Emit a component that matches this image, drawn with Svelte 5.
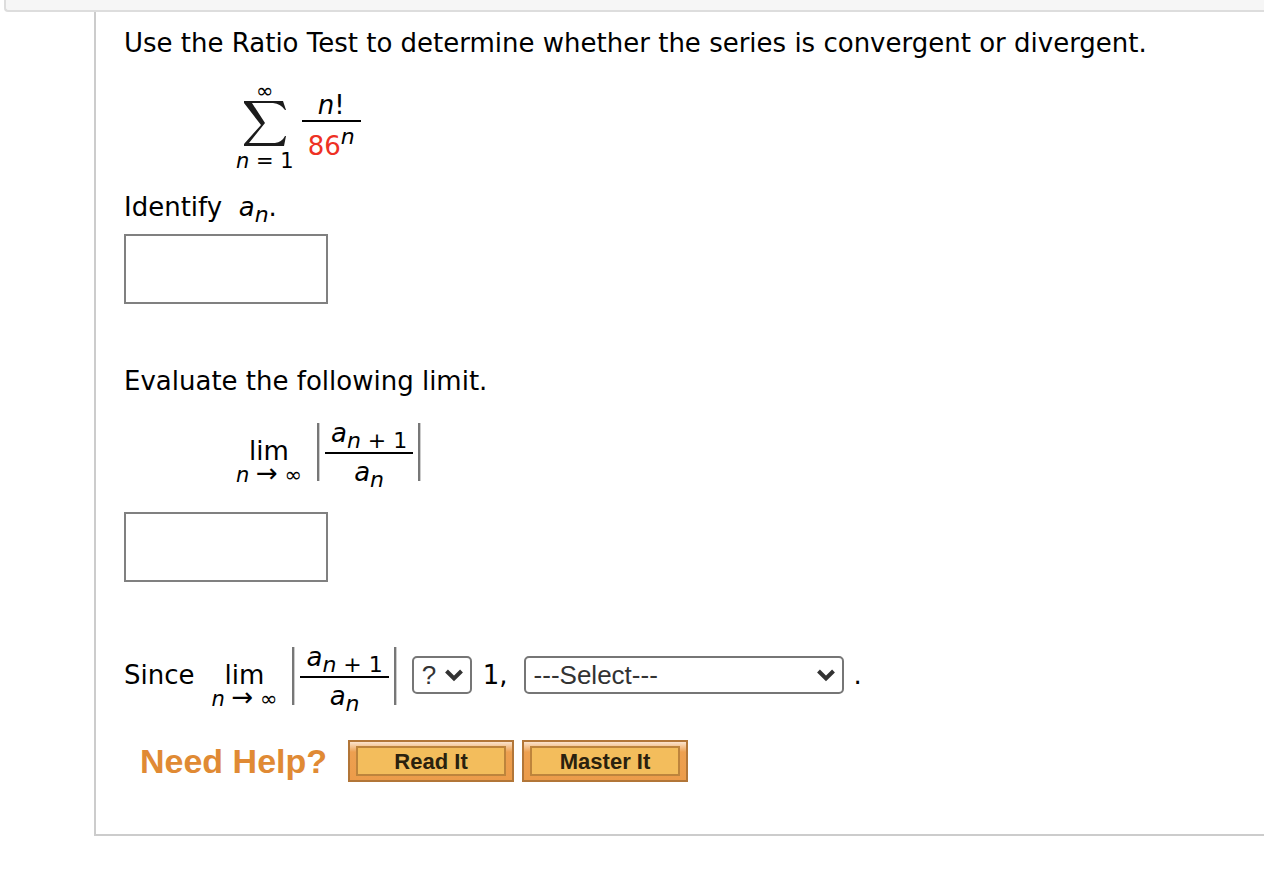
<script lang="ts">
  let term = $state('');
  let limit = $state('');
  let relation = $state('?');
  let conclusion = $state('');
</script>

{#snippet chevron()}
  <svg class="chevron" viewBox="0 0 18 13" aria-hidden="true">
    <path d="M1.5 2 L9 9.5 L16.5 2" fill="none" stroke="#333" stroke-width="4" />
  </svg>
{/snippet}

{#snippet ratioLimit()}
  <div class="limit">
    <div class="lim">
      <span>lim</span>
      <span class="under"><i>n</i> <span class="arrow">→</span> ∞</span>
    </div>
    <div class="abs">
      <div class="fraction">
        <div class="num"><i>a</i><sub><i>n</i> + 1</sub></div>
        <div class="den"><i>a</i><sub><i>n</i></sub></div>
      </div>
    </div>
  </div>
{/snippet}

<div class="part-header"></div>
<main class="question">
  <p>Use the Ratio Test to determine whether the series is convergent or divergent.</p>

  <div class="series">
    <div class="sum">
      <span class="upper">∞</span>
      <svg class="sigma" viewBox="0 0 42 46" aria-hidden="true">
        <path
          d="M0 0 H39 L42 9 H41 Q37 3 29 2 H8 L21 22 L5 42 H31 Q38 41 41 35 H42 L40 45 H0 V43 L17 24 L0 2 Z"
          fill="#1c1c1c"
        />
      </svg>
      <span class="lower"><i>n</i> = 1</span>
    </div>
    <div class="fraction">
      <div class="num plain"><i>n</i>!</div>
      <div class="den power"><span class="random">86</span><sup><i>n</i></sup></div>
    </div>
  </div>

  <label class="identify" for="term">Identify&nbsp; <i>a</i><sub><i>n</i></sub>.</label>
  <input id="term" class="answer" type="text" bind:value={term} />

  <label class="evaluate" for="limit">Evaluate the following limit.</label>
  <div class="display">{@render ratioLimit()}</div>
  <input id="limit" class="answer" type="text" bind:value={limit} />

  <div class="since">
    <span class="word">Since</span>
    {@render ratioLimit()}
    <span class="select small">
      <select aria-label="Comparison" bind:value={relation}>
        <option value="?">?</option>
        <option value="<">&lt;</option>
        <option value="=">=</option>
        <option value=">">&gt;</option>
      </select>
      {@render chevron()}
    </span>
    <span>1,</span>
    <span class="select wide">
      <select aria-label="Conclusion" bind:value={conclusion}>
        <option value="">---Select---</option>
        <option value="c">the series is convergent</option>
        <option value="d">the series is divergent</option>
        <option value="i">the test is inconclusive</option>
      </select>
      {@render chevron()}
    </span>
    <span>.</span>
  </div>

  <div class="help">
    <strong>Need Help?</strong>
    <button type="button"><span>Read It</span></button>
    <button type="button"><span>Master It</span></button>
  </div>
</main>

<style>
  :global(body) {
    background: #fff;
    overflow-x: hidden;
  }

  .part-header {
    box-sizing: border-box;
    height: 12px;
    margin-left: 4px;
    background: #f6f6f6;
    border: 2px solid #ddd;
    border-width: 0 0 2px 2px;
    border-bottom-left-radius: 4px;
  }

  .question {
    margin-left: 94px;
    padding: 15px 0 52px 28px;
    border-left: 2px solid #ccc;
    border-bottom: 2px solid #ccc;
    font-family: Verdana, "DejaVu Sans", sans-serif;
    font-size: 26px;
    line-height: 32px;
    color: #000;
  }

  p {
    margin: 0;
  }

  sub,
  sup {
    font-size: 22px;
    line-height: 0;
    vertical-align: baseline;
    position: relative;
  }

  sub {
    top: 6px;
  }

  sup {
    top: -11px;
  }

  .series {
    display: flex;
    gap: 8px;
    margin: 22px 0 0 112px;
  }

  .sum {
    display: flex;
    flex-direction: column;
    align-items: center;
  }

  .upper {
    font-size: 21px;
    line-height: 20px;
  }

  .sigma {
    width: 42px;
    height: 46px;
  }

  .lower {
    font-size: 21px;
    line-height: 28px;
  }

  .fraction {
    text-align: center;
    white-space: nowrap;
  }

  .num {
    border-bottom: 2px solid #000;
    padding: 0 6px;
    line-height: 34px;
    height: 36px;
  }

  .den {
    line-height: 36px;
  }

  .plain {
    height: 37px;
    padding-top: 2px;
    line-height: 44px;
  }

  .power {
    padding: 0 6px;
    line-height: 48px;
  }

  .random {
    color: #ee3124;
  }

  label {
    display: block;
  }

  .identify {
    margin-top: 16px;
  }

  .evaluate {
    margin-top: 61px;
  }

  .answer {
    display: block;
    box-sizing: border-box;
    width: 204px;
    height: 70px;
    margin: 0;
    padding: 4px 8px;
    border: 2px solid #808080;
    border-radius: 0;
    background: #fff;
    font: inherit;
  }

  .identify + .answer {
    margin-top: 11px;
  }

  .display {
    margin: 19px 0 22px 112px;
  }

  .limit {
    display: flex;
    align-items: center;
    gap: 15px;
  }

  .lim {
    display: flex;
    flex-direction: column;
    align-items: center;
    padding-top: 20px;
    line-height: 24px;
  }

  .under {
    font-size: 21px;
    white-space: nowrap;
  }

  .arrow {
    font-size: 26px;
    line-height: 0;
  }

  .abs {
    display: flex;
    padding: 0 8px;
    background:
      linear-gradient(to right, #777 2px, #ccc 2px) left 7px / 3px 58px no-repeat,
      linear-gradient(to right, #777 2px, #ccc 2px) right 7px / 3px 58px no-repeat;
  }

  .since {
    display: flex;
    align-items: center;
    margin-top: 54px;
  }

  .since .limit {
    margin-top: 4px;
  }

  .word {
    margin-right: 17px;
  }

  .select {
    position: relative;
    display: inline-block;
  }

  .small {
    width: 60px;
    margin: 0 11px 0 15px;
  }

  .wide {
    width: 320px;
    margin: 0 10px 0 16px;
  }

  select {
    display: block;
    appearance: none;
    box-sizing: border-box;
    width: 100%;
    height: 38px;
    margin: 0;
    padding: 0 8px;
    border: 2px solid #767676;
    border-radius: 5px;
    background: #fff;
    color: #333;
    font-family: Arial, "Liberation Sans", sans-serif;
    font-size: 26px;
  }

  .chevron {
    position: absolute;
    top: 13px;
    right: 9px;
    width: 18px;
    height: 13px;
    pointer-events: none;
  }

  .help {
    display: flex;
    align-items: center;
    gap: 8px;
    margin: 26px 0 0 16px;
    font-family: Arial, "Liberation Sans", sans-serif;
  }

  strong {
    margin-right: 13px;
    font-size: 34px;
    color: #e08a34;
  }

  button {
    box-sizing: border-box;
    width: 166px;
    height: 42px;
    padding: 4px 6px;
    border: 2px solid #b27638;
    background: linear-gradient(#fbe3cd, #eda050 10px, #ec9c4a);
    font-family: Arial, "Liberation Sans", sans-serif;
    font-size: 22px;
    font-weight: bold;
    color: #2a210e;
    cursor: pointer;
  }

  button span {
    display: block;
    padding-top: 2px;
    border: 2px solid #bd843c;
    background: #f3bd5c;
    line-height: 24px;
  }
</style>
